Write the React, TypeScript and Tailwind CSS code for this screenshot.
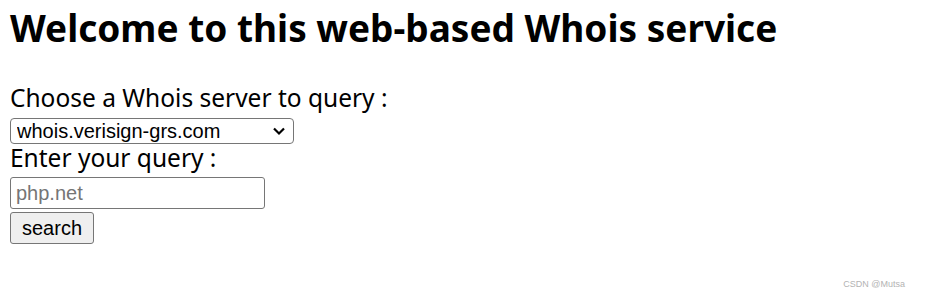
export default function App() {
  return (
    <div className="relative h-[300px] w-[932px] bg-white px-[10px] font-['Noto_Sans',sans-serif] text-black">
      <h1 className="pt-[4px] text-[37px] font-bold leading-[48px]">
        Welcome to this web-based Whois service
      </h1>
      <form className="mt-[32px] flex flex-col items-start" onSubmit={(e) => e.preventDefault()}>
        <label className="text-[24.5px] leading-[28px]">Choose a Whois server to query :</label>
        <select
          defaultValue="whois.verisign-grs.com"
          className="mt-[6px] h-[26px] w-[284px] appearance-none rounded-[4px] border border-[#767676] bg-white pl-[6px] font-['Liberation_Sans',sans-serif] text-[20px] leading-[22px] text-black"
          style={{
            backgroundImage:
              "url(\"data:image/svg+xml,%3Csvg xmlns='http://www.w3.org/2000/svg' width='14' height='10' viewBox='0 0 14 10'%3E%3Cpath d='M2 2.5l5 5 5-5' fill='none' stroke='black' stroke-width='2.2'/%3E%3C/svg%3E\")",
            backgroundRepeat: 'no-repeat',
            backgroundPosition: 'right 7px center',
          }}
        >
          <option>whois.verisign-grs.com</option>
          <option>whois.nic.uk</option>
          <option>whois.cnnic.cn</option>
        </select>
        <label className="text-[24.5px] leading-[28px]">Enter your query :</label>
        <input
          type="text"
          placeholder="php.net"
          className="mt-[5px] h-[32px] w-[255px] rounded-[3px] border border-[#767676] bg-white px-[5px] font-['Liberation_Sans',sans-serif] text-[20px] text-black placeholder:text-[#757575] outline-none"
        />
        <button
          type="submit"
          className="mt-[3px] h-[32px] w-[84px] rounded-[3px] border border-[#767676] bg-[#efefef] font-['Liberation_Sans',sans-serif] text-[20px] text-black"
        >
          search
        </button>
      </form>
      <div className="absolute right-[27px] bottom-[9px] font-['Liberation_Sans',sans-serif] text-[9px] text-[#b3b3b3]">
        CSDN @Mutsa
      </div>
    </div>
  );
}
